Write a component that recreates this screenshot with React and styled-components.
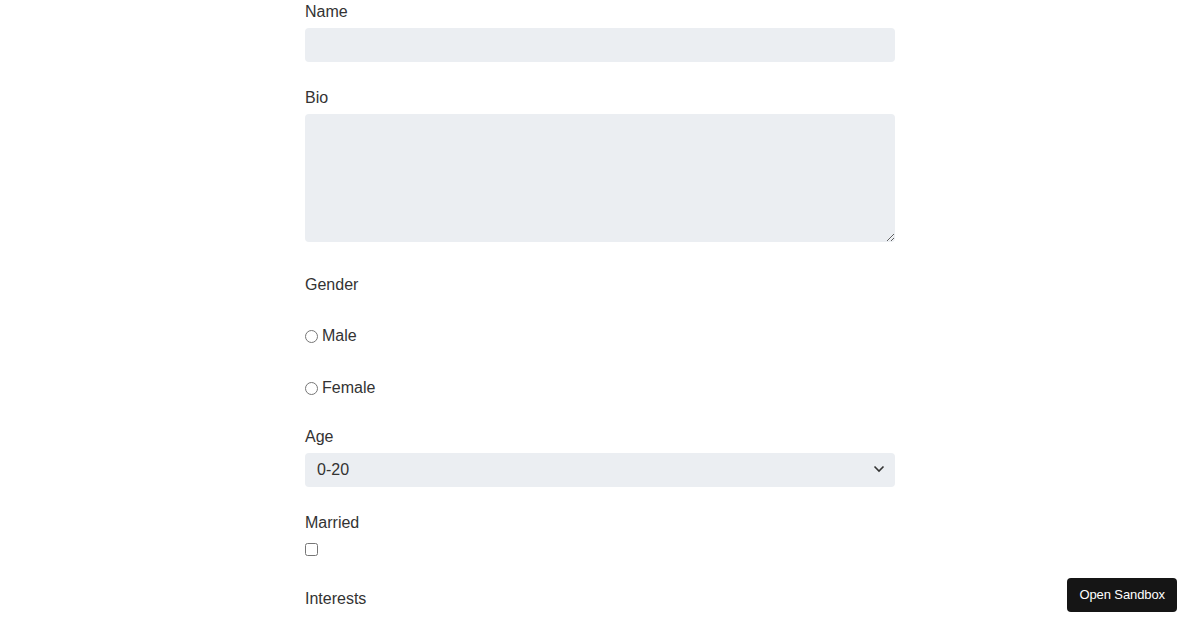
import React from 'react'
import styled, { createGlobalStyle } from 'styled-components'

const GlobalStyle = createGlobalStyle`
    body {
        margin: 0;
        background: #fff;
        font-family: "Liberation Sans", Arial, sans-serif;
        color: #333;
    }
`

const colors = {
    text: '#333333',
    field: '#ebeef2',
    button: '#151515',
}

const Form = styled.form`
    width: 590px;
    margin: 0 auto;
    padding-top: 2px;
    display: flex;
    flex-direction: column;
`

const Field = styled.div`
    display: flex;
    flex-direction: column;
    align-items: flex-start;
    margin-bottom: ${({ gap = 26 }) => gap}px;
`

const Label = styled.label`
    font-size: 16px;
    line-height: 20px;
    color: ${colors.text};
    margin-bottom: ${({ space = 6 }) => space}px;
`

const TextInput = styled.input`
    box-sizing: border-box;
    width: 100%;
    height: 34px;
    border: none;
    border-radius: 4px;
    background: ${colors.field};
    padding: 0 12px;
    font: 16px "Liberation Sans", Arial, sans-serif;
    outline: none;
`

const TextArea = styled.textarea`
    box-sizing: border-box;
    width: 100%;
    height: 128px;
    display: block;
    border: none;
    border-radius: 4px;
    background: ${colors.field};
    padding: 8px 12px;
    font: 16px "Liberation Sans", Arial, sans-serif;
    outline: none;
`

const RadioRow = styled.label`
    display: flex;
    align-items: center;
    font-size: 16px;
    line-height: 18px;
    color: ${colors.text};
    margin-bottom: ${({ gap = 34 }) => gap}px;

    input {
        margin: 0 4px 0 0;
        width: 13px;
        height: 13px;
    }
`

const SelectWrap = styled.div`
    position: relative;
    width: 100%;
`

const Select = styled.select`
    box-sizing: border-box;
    width: 100%;
    height: 34px;
    border: none;
    border-radius: 4px;
    background: ${colors.field};
    padding: 0 12px 1px;
    font: 16px "Liberation Sans", Arial, sans-serif;
    color: ${colors.text};
    appearance: none;
    outline: none;
`

const Chevron = styled.svg`
    position: absolute;
    right: 10px;
    top: 12px;
    pointer-events: none;
`

const Checkbox = styled.input`
    margin: 4px 0 0 0;
    width: 13px;
    height: 13px;
`

const SandboxButton = styled.button`
    position: fixed;
    right: 23px;
    bottom: 18px;
    height: 34px;
    padding: 0 12px;
    border: none;
    border-radius: 4px;
    background: ${colors.button};
    color: #fff;
    font: 13px/14px "Liberation Sans", Arial, sans-serif;
    letter-spacing: -0.1px;
`

const App = () => {
    return (<>
        <GlobalStyle />
        <Form>
            <Field>
                <Label>Name</Label>
                <TextInput type='text' />
            </Field>
            <Field gap={33}>
                <Label>Bio</Label>
                <TextArea />
            </Field>
            <Field gap={32}>
                <Label space={0}>Gender</Label>
            </Field>
            <RadioRow>
                <input type='radio' name='gender' />Male
            </RadioRow>
            <RadioRow gap={30}>
                <input type='radio' name='gender' />Female
            </RadioRow>
            <Field>
                <Label>Age</Label>
                <SelectWrap>
                    <Select defaultValue='0-20'>
                        <option>0-20</option>
                        <option>21-40</option>
                        <option>41-60</option>
                        <option>61+</option>
                    </Select>
                    <Chevron width='12' height='8' viewBox='0 0 12 8'>
                        <path d='M1.5 1.5 L6 6 L10.5 1.5' fill='none' stroke='#333' strokeWidth='1.6' />
                    </Chevron>
                </SelectWrap>
            </Field>
            <Field gap={33}>
                <Label>Married</Label>
                <Checkbox type='checkbox' />
            </Field>
            <Field>
                <Label>Interests</Label>
            </Field>
        </Form>
        <SandboxButton type='button'>Open Sandbox</SandboxButton>
    </>)
}

export default App
